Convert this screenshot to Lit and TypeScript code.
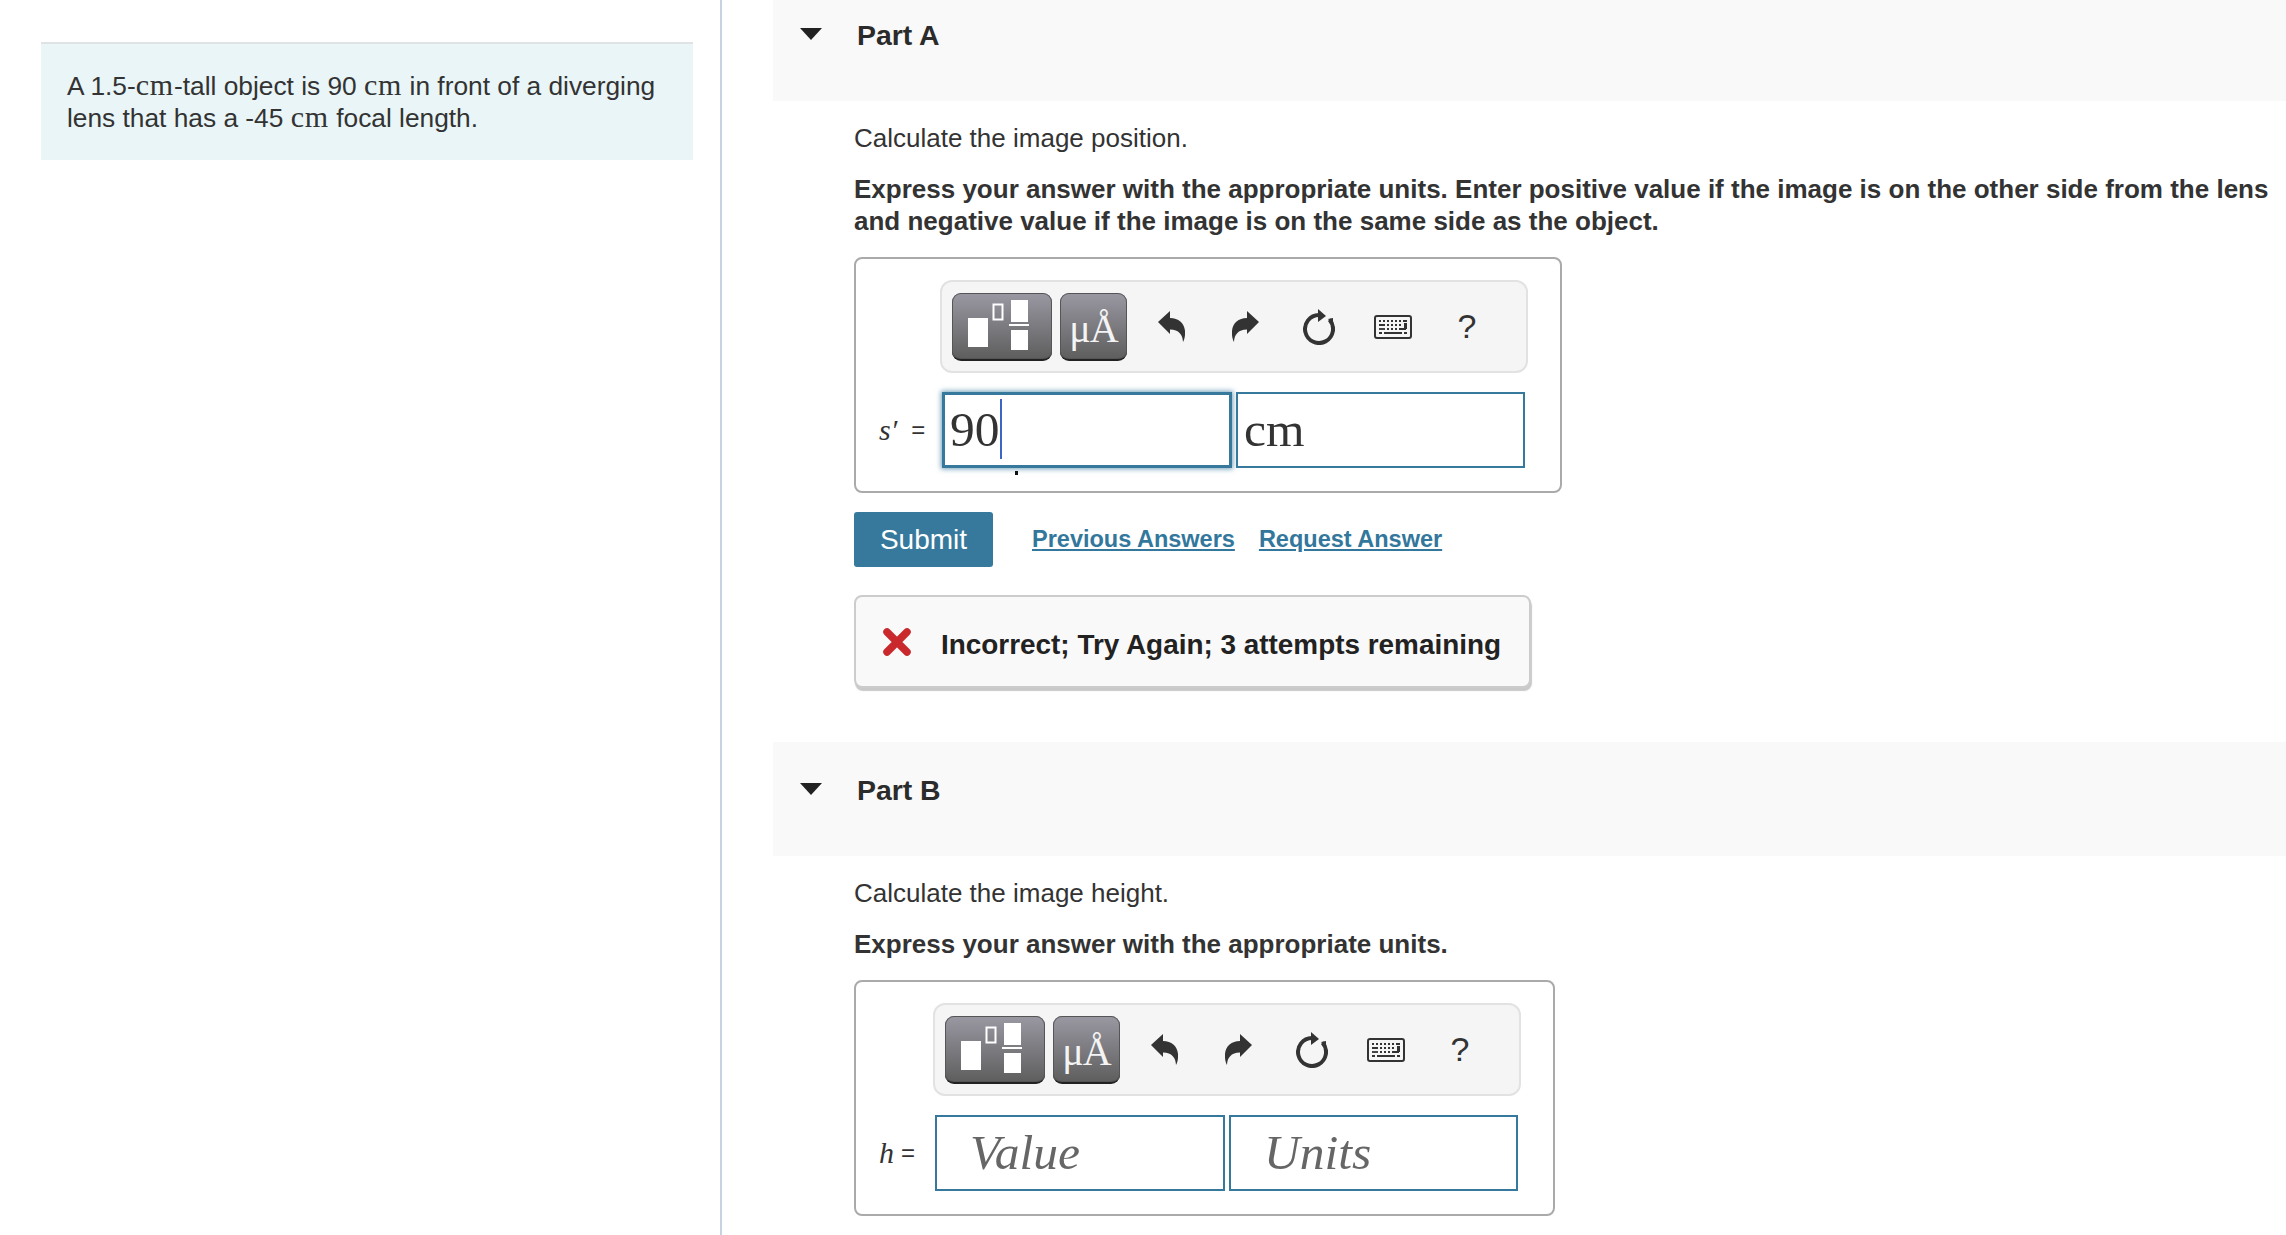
import { LitElement, html, css, svg } from "lit";
import { customElement } from "lit/decorators.js";

const templateIcon = svg`<svg class="tpl" viewBox="0 0 100 68" width="100" height="68">
  <rect x="16" y="26" width="20" height="29" fill="#fff"/>
  <rect x="41.5" y="12.5" width="9" height="15" fill="none" stroke="#fff" stroke-width="2"/>
  <rect x="59" y="8" width="17" height="22" fill="#fff"/>
  <rect x="57" y="32" width="20" height="2" fill="#fff"/>
  <rect x="59" y="38" width="17" height="20" fill="#fff"/>
</svg>`;

const undoIcon = svg`<svg viewBox="0 0 27 31" width="27" height="31"><path d="M0 11 L12 0 V7 C22 7 28 14 27 24 C26.7 27 26 29.5 25 31 C24.8 24 21 18.5 12 18.5 V23 Z" fill="#333"/></svg>`;
const redoIcon = svg`<svg viewBox="0 0 27 31" width="27" height="31"><path d="M27 11 L15 0 V7 C5 7 -1 14 0 24 C0.3 27 1 29.5 2 31 C2.2 24 6 18.5 15 18.5 V23 Z" fill="#333"/></svg>`;
const resetIcon = svg`<svg viewBox="0 0 32 36" width="32" height="36">
  <path d="M26.5 10.7 A14 14 0 1 1 16 6" fill="none" stroke="#333" stroke-width="4"/>
  <path d="M15 0 L23 7 L15 13 Z" fill="#333"/>
  <path d="M25 10 L30 9 L30 15 Z" fill="#333"/>
</svg>`;
const keyboardIcon = svg`<svg viewBox="0 0 38 24" width="38" height="24">
  <rect x="1" y="1" width="36" height="22" rx="2" fill="none" stroke="#333" stroke-width="2"/>
  <g fill="#333">
    <rect x="5" y="5" width="2" height="2"/><rect x="9" y="5" width="2" height="2"/><rect x="13" y="5" width="2" height="2"/><rect x="17" y="5" width="2" height="2"/><rect x="21" y="5" width="2" height="2"/><rect x="25" y="5" width="2" height="2"/><rect x="29" y="5" width="4" height="2"/>
    <rect x="5" y="9" width="6" height="2"/><rect x="13" y="9" width="2" height="2"/><rect x="17" y="9" width="2" height="2"/><rect x="21" y="9" width="2" height="2"/><rect x="25" y="9" width="2" height="2"/><rect x="30" y="8" width="3" height="6"/>
    <rect x="5" y="13" width="6" height="2" opacity="0.9"/><rect x="13" y="13" width="2" height="2"/><rect x="17" y="13" width="2" height="2"/><rect x="21" y="13" width="2" height="2"/><rect x="25" y="13" width="7" height="2"/>
    <rect x="5" y="17" width="3" height="2"/><rect x="10" y="17" width="18" height="2"/><rect x="30" y="17" width="3" height="2"/>
  </g>
</svg>`;
const crossIcon = svg`<svg viewBox="0 0 28 28" width="28" height="28"><path d="M4 4 L24 24 M24 4 L4 24" stroke="#c9292c" stroke-width="7.5" stroke-linecap="round" fill="none"/></svg>`;

@customElement("app-root")
export class AppRoot extends LitElement {
  static styles = css`
    :host { display: block; height: 100vh; overflow: hidden; background: #fff; color: #333; font-family: "Liberation Sans", Arial, sans-serif; font-size: 26px; line-height: 32px; }
    .page { display: flex; height: 100%; }
    .left { width: 722px; flex: none; box-sizing: border-box; padding: 42px 27px 0 41px; border-right: 2px solid #c5d3e3; }
    .intro { background: #e9f5f7; border-top: 2px solid #dfe3e4; padding: 26px 20px 26px 26px; }
    .intro p { margin: 0; font-size: 26.3px; line-height: 32px; }
    .mu { font-family: "Liberation Serif", serif; font-size: 30px; line-height: 20px; letter-spacing: 0.8px; }
    .right { flex: 1; min-width: 0; padding-left: 51px; }
    .head { display: flex; align-items: flex-start; height: 114px; background: #f9f9f9; padding-top: 32px; box-sizing: border-box; font-weight: bold; font-size: 28.4px; color: #2b2b2b; }
    .head.first { margin-top: -13px; }
    .tri { width: 0; height: 0; margin: 9px 0 0 27px; border-left: 11px solid transparent; border-right: 11px solid transparent; border-top: 12px solid #222; }
    .head span { margin-left: 35px; }
    .part { padding-left: 81px; }
    .part p { margin: 0; }
    .q { padding-top: 21px; }
    .ins { font-weight: bold; margin-top: 19px !important; margin-bottom: 20px !important; }
    .box { display: inline-grid; grid-template-columns: auto auto; border: 2px solid #aaa; border-radius: 8px; padding: 21px 35px 23px 23px; row-gap: 19px; vertical-align: top; }
    .toolbar { grid-column: 2; margin: 0 -3px 0 -2px; display: flex; align-items: center; width: 588px; height: 93px; box-sizing: border-box; background: #f5f5f5; border: 2px solid #e2e2e2; border-radius: 12px; padding-left: 10px; }
    .btn { height: 68px; box-sizing: border-box; border-radius: 9px; background: linear-gradient(#9a98a2, #5e5e5e); border-bottom: 2px solid #222; box-shadow: inset 0 0 0 1px #555; display: flex; align-items: center; justify-content: center; color: #fff; }
    .tpl { display: block; }
    .btn.a { width: 100px; }
    .btn.b { width: 67px; margin-left: 8px; font-family: "Liberation Serif", serif; font-size: 40px; letter-spacing: -1px; line-height: 60px; padding-top: 6px; color: #f4f4f4; }
    .tool { width: 74px; display: flex; justify-content: center; align-items: center; color: #333; flex: none; }
    .tools { display: flex; align-items: center; margin-left: 7px; }
    .q-mark { font-size: 34px; line-height: 40px; padding-bottom: 2px; }
    .lbl { display: flex; align-items: center; font-size: 24px; }
    .lbl i { font-family: "Liberation Serif", serif; font-size: 30px; }
    .lbl.s { width: 63px; gap: 14px; }
    .lbl.h { width: 56px; gap: 7px; }
    .fields { display: flex; gap: 4px; }
    .field { position: relative; height: 76px; box-sizing: border-box; border: 2px solid #37799c; font-family: "Liberation Serif", serif; font-size: 49.5px; line-height: 72px; color: #333; }
    .field.v { width: 290px; }
    .field.u { width: 289px; }
    .field.filled { padding-left: 6px; }
    .field.focus { border-width: 3px; box-shadow: 0 0 5px 1px rgba(55,121,156,.7); line-height: 70px; padding-left: 5px; }
    .field.ph { padding-left: 33px; font-style: italic; color: #666; }
    .caret { position: absolute; left: 55px; top: 4px; width: 2px; height: 60px; background: #3d66c4; }
    .dot { position: absolute; left: 70px; top: 76px; width: 3px; height: 4px; background: #111; }
    .actions { display: flex; align-items: center; margin-top: 19px; }
    .submit { width: 139px; height: 55px; display: flex; align-items: center; justify-content: center; border-radius: 3px; background: #37799c; color: #fff; font-size: 28px; }
    .link { color: #33779c; font-weight: bold; text-decoration: underline; font-size: 23.5px; margin-top: -2px; }
    .link.one { margin-left: 39px; }
    .link.two { margin-left: 24px; }
    .fb { display: inline-flex; align-items: center; margin-top: 28px; width: 677px; height: 93px; box-sizing: border-box; border: 2px solid #ccc; border-radius: 8px; background: #f9f9f9; box-shadow: 1px 3px 1px #c9c9c9; padding-left: 27px; font-weight: bold; color: #222; }
    .fb svg { display: block; }
    .fb span { margin-left: 30px; font-size: 27.9px; padding-top: 6px; }
    .two-head { margin-top: 54px; }
  `;

  private toolbar() {
    return html`<div class="toolbar">
      <div class="btn a">${templateIcon}</div>
      <div class="btn b">μÅ</div>
      <div class="tools">
        <div class="tool">${undoIcon}</div>
        <div class="tool">${redoIcon}</div>
        <div class="tool">${resetIcon}</div>
        <div class="tool">${keyboardIcon}</div>
        <div class="tool q-mark">?</div>
      </div>
    </div>`;
  }

  render() {
    return html`<div class="page">
      <div class="left">
        <div class="intro"><p>A 1.5-<span class="mu">cm</span>-tall object is 90 <span class="mu">cm</span> in front of a diverging lens that has a -45 <span class="mu">cm</span> focal length.</p></div>
      </div>
      <div class="right">
        <div class="head first"><div class="tri"></div><span>Part A</span></div>
        <div class="part">
          <p class="q">Calculate the image position.</p>
          <p class="ins">Express your answer with the appropriate units. Enter positive value if the image is on the other side from the lens and negative value if the image is on the same side as the object.</p>
          <div class="box">
            ${this.toolbar()}
            <div class="lbl s"><i>s′</i><span>=</span></div>
            <div class="fields">
              <div class="field v focus">90<div class="caret"></div><div class="dot"></div></div>
              <div class="field u filled">cm</div>
            </div>
          </div>
          <div class="actions">
            <div class="submit">Submit</div>
            <a class="link one">Previous Answers</a>
            <a class="link two">Request Answer</a>
          </div>
          <div class="fb">${crossIcon}<span>Incorrect; Try Again; 3 attempts remaining</span></div>
        </div>
        <div class="head two-head"><div class="tri"></div><span>Part B</span></div>
        <div class="part">
          <p class="q">Calculate the image height.</p>
          <p class="ins">Express your answer with the appropriate units.</p>
          <div class="box">
            ${this.toolbar()}
            <div class="lbl h"><i>h</i><span>=</span></div>
            <div class="fields">
              <div class="field v ph">Value</div>
              <div class="field u ph">Units</div>
            </div>
          </div>
        </div>
      </div>
    </div>`;
  }
}
